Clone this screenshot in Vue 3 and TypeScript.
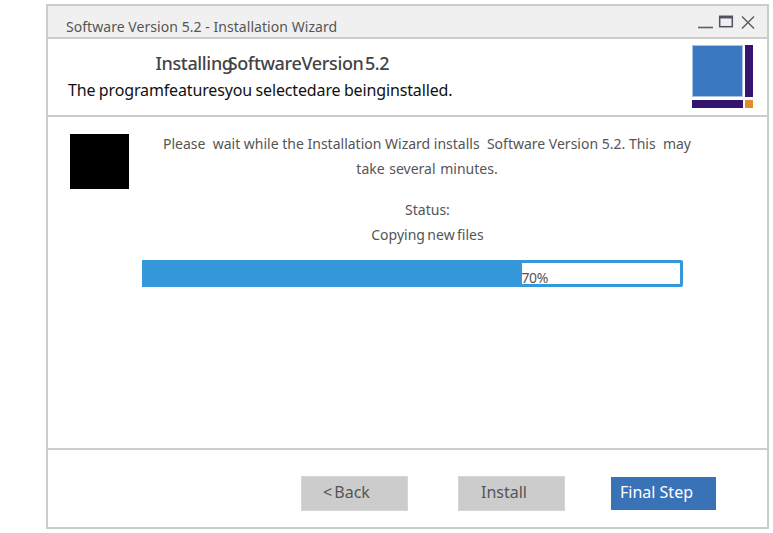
<script setup lang="ts">
const progress = 70
</script>

<template>
  <div class="page">
    <div class="window">
      <div class="titlebar">
        <span class="title">Software Version 5.2 - Installation Wizard</span>
        <div class="controls">
          <svg width="58" height="16" viewBox="0 0 58 16">
            <path d="M1 12.5H16" stroke="#606060" stroke-width="1.6" fill="none" />
            <rect x="22.7" y="1.3" width="12.6" height="10.4" fill="none" stroke="#505060" stroke-width="1.5" />
            <path d="M22 2.2H36" stroke="#505060" stroke-width="2.5" fill="none" />
            <path d="M45 1.5L57 13.5M57 1.5L45 13.5" stroke="#606060" stroke-width="1.5" fill="none" />
          </svg>
        </div>
      </div>

      <header class="header">
        <div class="header-text">
          <h1 class="heading">Installing<span class="tuck">Software</span>Version 5.2</h1>
          <p class="subheading">The <span class="gap">program</span> features you <span class="gap">selected</span> are <span class="gap">being</span> installed.</p>
        </div>
        <div class="logo">
          <span class="logo-main"></span>
          <span class="logo-side"></span>
          <span class="logo-bottom"></span>
          <span class="logo-corner"></span>
        </div>
      </header>

      <main class="content">
        <div class="black-box"></div>
        <div class="details">
          <p class="message">Please&nbsp; wait while the Installation Wizard installs&nbsp; Software Version 5.2. This&nbsp; may<br /><span class="second">take several minutes.</span></p>
          <p class="status-label">Status:</p>
          <p class="status-value">Copying new files</p>
          <div class="progress">
            <div class="progress-fill" :style="{ width: progress + '%' }"></div>
            <span class="progress-text">{{ progress }}%</span>
          </div>
        </div>
      </main>

      <footer class="footer">
        <button class="btn btn-back" type="button">&lt; Back</button>
        <button class="btn btn-install" type="button">Install</button>
        <button class="btn btn-primary" type="button">Final Step</button>
      </footer>
    </div>
  </div>
</template>

<style scoped>
.page {
  width: 773px;
  height: 533px;
  box-sizing: border-box;
  padding: 4px 4px 4px 46px;
  background: #fff;
  font-family: "Noto Sans", sans-serif;
  color: #555;
}
.window {
  height: 525px;
  box-sizing: border-box;
  border: 2px solid #ccc;
  display: flex;
  flex-direction: column;
}
.titlebar {
  height: 33px;
  flex: none;
  box-sizing: border-box;
  background: #f0f0f0;
  border-bottom: 2px solid #ccc;
  display: flex;
  align-items: flex-end;
  justify-content: space-between;
  padding: 0 12px 1px 18px;
}
.title {
  font-size: 14px;
  line-height: 18px;
  letter-spacing: 0.05px;
  color: #555;
}
.controls {
  align-self: flex-start;
  padding-top: 9px;
  line-height: 0;
}
.header {
  height: 78px;
  flex: none;
  box-sizing: border-box;
  border-bottom: 2px solid #ccc;
  display: flex;
  justify-content: space-between;
  padding: 6px 14px 0 20px;
}
.heading {
  margin: 6px 0 0 87.5px;
  font-size: 18px;
  line-height: 24px;
  font-weight: 500;
  letter-spacing: -0.35px;
  color: #444;
  word-spacing: -3px;
}
.tuck {
  margin-left: -5px;
}
.subheading {
  margin: 3px 0 0;
  font-size: 16px;
  line-height: 24px;
  color: #111;
  letter-spacing: -0.14px;
  word-spacing: -4px;
}
.gap {
  margin-left: 3.4px;
}
.logo {
  width: 61px;
  height: 63px;
  display: grid;
  grid-template-columns: 51px 8px;
  grid-template-rows: 52px 8px;
  column-gap: 2px;
  row-gap: 3px;
}
.logo-main {
  background: #3a78c2;
  border: 1px solid #a9c3e2;
  box-sizing: border-box;
}
.logo-side,
.logo-bottom {
  background: #35146f;
}
.logo-corner {
  background: #df8f27;
}
.content {
  flex: 1;
  display: flex;
  padding: 17px 0 0 22px;
}
.black-box {
  width: 59px;
  height: 55px;
  flex: none;
  background: #000;
}
.details {
  flex: none;
  width: 596px;
  margin-top: -3px;
  text-align: center;
  font-size: 14px;
  color: #555;
}
.message {
  margin: 0;
  line-height: 25px;
}
.second {
  word-spacing: 1px;
}
.status-label {
  margin: 16px 0 0;
  line-height: 25px;
  padding-left: 1px;
}
.status-value {
  margin: 0;
  line-height: 25px;
  padding-left: 1px;
  word-spacing: -1.2px;
}
.progress {
  position: relative;
  width: 541px;
  height: 27px;
  margin: 13px 0 0 13px;
  box-sizing: border-box;
  border: 3px solid #3498db;
  border-radius: 2px;
  background: #fff;
  text-align: left;
}
.progress-fill {
  position: absolute;
  left: -3px;
  top: -3px;
  bottom: -3px;
  padding-left: 5.5px;
  box-sizing: content-box;
  background: #3498db;
}
.progress-text {
  position: absolute;
  left: 376.5px;
  top: 5px;
  line-height: 19px;
  font-size: 14px;
  letter-spacing: -0.4px;
  color: #555;
}
.footer {
  height: 79px;
  flex: none;
  box-sizing: border-box;
  border-top: 2px solid #ccc;
  display: flex;
  align-items: flex-start;
  padding: 26px 0 0 253px;
}
.btn {
  height: 35px;
  width: 107px;
  border: 1px solid #d6d6d6;
  padding: 0;
  font: 16px/30px "Noto Sans", sans-serif;
  background: #ccc;
  color: #555;
  text-align: left;
  box-sizing: border-box;
}
.btn-back {
  padding-left: 21px;
  padding-bottom: 4px;
  word-spacing: -2px;
}
.btn-install {
  margin-left: 50px;
  padding-left: 22px;
  padding-bottom: 4px;
}
.btn-primary {
  margin: 1px 0 0 46px;
  width: 105px;
  height: 33px;
  border: none;
  padding-left: 9px;
  padding-bottom: 4px;
  background: #3a72b8;
  color: #fff;
}
</style>
